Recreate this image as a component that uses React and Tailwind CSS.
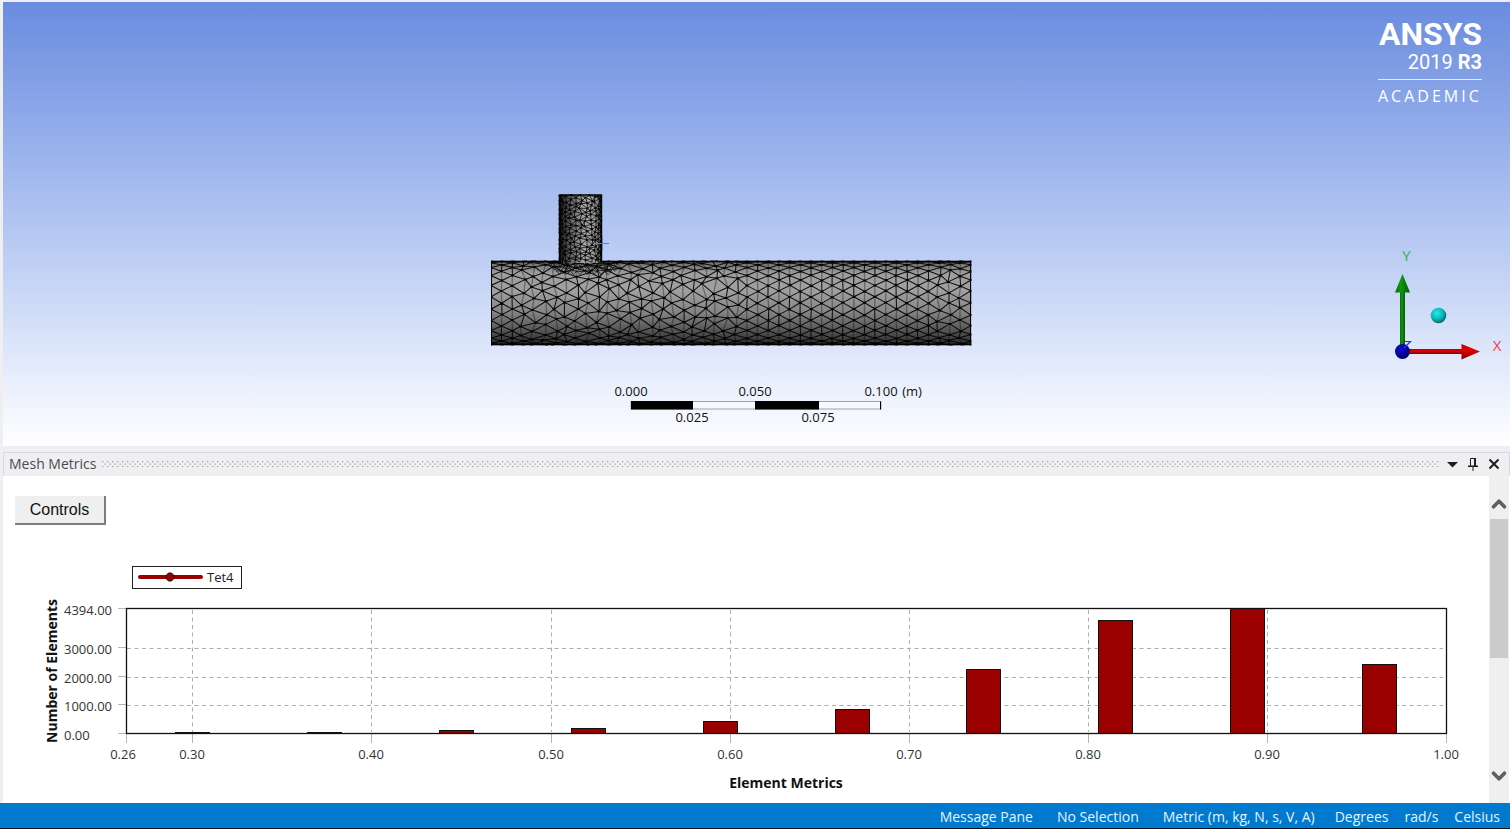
import { ChevronDown, ChevronUp } from "lucide-react";

const STATUS_ITEMS = [
  { label: "Message Pane", className: "mr-6" },
  { label: "No Selection", className: "mr-6" },
  { label: "Metric (m, kg, N, s, V, A)", className: "mr-5" },
  { label: "Degrees", className: "mr-4" },
  { label: "rad/s", className: "mr-4" },
  { label: "Celsius", className: "" },
];

const BARS = [45, 50, 110, 180, 420, 850, 2230, 3940, 4394, 2420];
const X_TICKS = [0.3, 0.4, 0.5, 0.6, 0.7, 0.8, 0.9, 1.0];
const Y_TICKS = [4394, 3000, 2000, 1000, 0];

// small seeded generator so that the mesh is the same on every render
const createRandom = (seed) => {
  let s = seed;
  return () => {
    s = (s * 16807) % 2147483647;
    return s / 2147483647;
  };
};

const segment = (a, b) =>
  `M${a[0].toFixed(1)} ${a[1].toFixed(1)}L${b[0].toFixed(1)} ${b[1].toFixed(1)}`;

const clampAngle = (t) => Math.max(-Math.PI / 2, Math.min(Math.PI / 2, t));

const buildPipe = () => {
  const random = createRandom(4217);
  const cols = 45;
  const rows = 11;
  const points = [];
  for (let i = 0; i <= cols; i++) {
    const column = [];
    const x0 = 491 + (480 * i) / cols;
    const rough = i > 2 && i < 24 ? 0.9 : i > 41 && i < cols ? 0.7 : 0.15;
    for (let j = -1; j <= rows + 1; j++) {
      const angle =
        -Math.PI / 2 +
        ((j + (i % 2) / 2 + (random() - 0.5) * 0.5 * rough) * Math.PI) / rows;
      const edge = i === 0 || i === cols;
      const x = edge ? x0 : x0 + (random() - 0.5) * 6 * rough;
      column.push([x, 303 + 42 * Math.sin(clampAngle(angle))]);
    }
    points.push(column);
  }

  let dark = "";
  let soft = "";
  let nodes = "";
  for (let i = 0; i <= cols; i++) {
    for (let j = 0; j < rows + 2; j++) {
      const p = points[i][j];
      const r = random();
      if (r > 0.62) dark += segment(p, points[i][j + 1]);
      else soft += segment(p, points[i][j + 1]);
      nodes += `M${(p[0] - 1.5).toFixed(1)} ${p[1].toFixed(1)}h3`;
      if (i < cols) {
        const k = i % 2 ? j + 1 : j - 1;
        dark += segment(p, points[i + 1][j]);
        if (k >= 0) dark += segment(p, points[i + 1][k]);
      }
    }
  }
  return { dark, soft, nodes };
};

const buildBranch = () => {
  const random = createRandom(911);
  const cols = 12;
  const rows = 14;
  const points = [];
  for (let i = 0; i <= cols; i++) {
    const column = [];
    for (let j = 0; j <= rows; j++) {
      const angle = -Math.PI / 2 + ((i + (random() - 0.5) * 0.7) * Math.PI) / cols;
      const y = 195 + ((j + (i % 2) / 2 + (random() - 0.5) * 0.6) * 68) / rows;
      column.push([580.5 + 21 * Math.sin(clampAngle(angle)), Math.max(195, y)]);
    }
    points.push(column);
  }

  let dark = "";
  let nodes = "";
  for (let i = 0; i < cols; i++) {
    for (let j = 0; j < rows; j++) {
      const p = points[i][j];
      const k = i % 2 ? j + 1 : j - 1;
      dark += segment(p, points[i][j + 1]) + segment(p, points[i + 1][j]);
      if (k >= 0) dark += segment(p, points[i + 1][k]);
      nodes += `M${(p[0] - 1).toFixed(1)} ${p[1].toFixed(1)}h2`;
    }
  }
  return { dark, nodes };
};

// finer elements where the branch enters the pipe
const buildJunction = () => {
  const random = createRandom(77);
  let dark = "";
  for (let row = 0; row < 3; row++) {
    const step = 5 + row;
    const y = 262 + row * 4;
    for (let x = 548 + row * 4; x < 618 - row * 4; x += step) {
      const a = [x, y + random() * 2];
      dark += segment(a, [x + step / 2, y + 4 + random() * 2]);
      dark += segment([x + step / 2, y + 4], [x + step, y + random() * 2]);
      dark += segment(a, [x + step, y + random() * 2]);
    }
  }
  return dark;
};

const pipe = buildPipe();
const branch = buildBranch();
const junction = buildJunction();

const Model = () => (
  <svg
    viewBox="3 2 1507 444"
    className="absolute inset-0 w-full h-full"
    role="img"
    aria-label="Pipe mesh"
  >
    <defs>
      <linearGradient id="pipe" x1="0" y1="0" x2="0" y2="1">
        <stop offset="0" stopColor="#6a6a6a" />
        <stop offset="0.15" stopColor="#9e9e9e" />
        <stop offset="0.35" stopColor="#a0a0a0" />
        <stop offset="0.6" stopColor="#868686" />
        <stop offset="0.85" stopColor="#505050" />
        <stop offset="1" stopColor="#2a2a2a" />
      </linearGradient>
      <linearGradient id="branch" x1="0" y1="0" x2="1" y2="0">
        <stop offset="0" stopColor="#222222" />
        <stop offset="0.3" stopColor="#686868" />
        <stop offset="0.6" stopColor="#a8a8a8" />
        <stop offset="0.85" stopColor="#9a9a9a" />
        <stop offset="1" stopColor="#555555" />
      </linearGradient>
      <clipPath id="pipe-outline">
        <rect x="491" y="260.500" width="480.500" height="85" />
      </clipPath>
    </defs>

    <g clipPath="url(#pipe-outline)">
      <rect x="491" y="261" width="480" height="84" fill="url(#pipe)" />
      <path d={pipe.soft} stroke="#000" strokeOpacity="0.35" strokeWidth="1.300" />
      <path d={pipe.dark} stroke="#000" strokeOpacity="0.9" strokeWidth="1.050" />
      <path d={pipe.nodes} stroke="#000" strokeOpacity="0.85" strokeWidth="2" />
      <path d={junction} stroke="#000" strokeOpacity="0.8" strokeWidth="0.9" />
      <path d="M491 261.500H971M491 344.500H971" stroke="#000" strokeWidth="1.600" />
      <path d="M491.500 261V345M970.500 261V345" stroke="#000" strokeWidth="1" />
    </g>

    <rect x="559" y="195" width="43" height="68" fill="url(#branch)" />
    <path d={branch.dark} stroke="#000" strokeOpacity="0.8" strokeWidth="0.95" />
    <path d={branch.nodes} stroke="#000" strokeOpacity="0.8" strokeWidth="2" />
    <path d="M559.500 262V195H601.500V262" fill="none" stroke="#000" strokeWidth="1.400" />

    <path d="M594 243.500H609M602.500 236V251" stroke="#5b80e0" strokeWidth="1" />

    <rect x="631" y="401.500" width="250" height="7.500" fill="#f8f9fe" stroke="#a3a3a8" />
    <path d="M631 401h62v8.500h-62zM755 401h64v8.500h-64z" fill="#000" />
    <path d="M880.500 401.500v8" stroke="#000" />
    <g className="text-[13px]" fill="#111" textAnchor="middle">
      <text x="631" y="396">0.000</text>
      <text x="755" y="396">0.050</text>
      <text x="881" y="396">0.100</text>
      <text x="912" y="396">(m)</text>
      <text x="692" y="422">0.025</text>
      <text x="818" y="422">0.075</text>
    </g>
  </svg>
);

const Triad = () => (
  <svg
    width="120"
    height="130"
    viewBox="1390 240 120 130"
    className="absolute right-0 bottom-[76px]"
    role="img"
    aria-label="Axis triad"
  >
    <defs>
      <linearGradient id="green" x1="0" y1="0" x2="1" y2="0">
        <stop offset="0" stopColor="#0a6a0a" />
        <stop offset="0.4" stopColor="#0b9a0b" />
        <stop offset="1" stopColor="#075507" />
      </linearGradient>
      <linearGradient id="red" x1="0" y1="0" x2="0" y2="1">
        <stop offset="0" stopColor="#b00000" />
        <stop offset="0.4" stopColor="#e60000" />
        <stop offset="1" stopColor="#800000" />
      </linearGradient>
      <radialGradient id="blue" cx="0.4" cy="0.35" r="0.65">
        <stop offset="0" stopColor="#0b0bd8" />
        <stop offset="1" stopColor="#00006a" />
      </radialGradient>
      <radialGradient id="cyan" cx="0.4" cy="0.35" r="0.65">
        <stop offset="0" stopColor="#2ee6e6" />
        <stop offset="0.6" stopColor="#07b8b8" />
        <stop offset="1" stopColor="#046a6a" />
      </radialGradient>
    </defs>
    <rect x="1400" y="290" width="5" height="56" fill="url(#green)" />
    <path d="M1402.500 274L1410 292.500H1395Z" fill="url(#green)" />
    <rect x="1406" y="349" width="56" height="5" fill="url(#red)" />
    <path d="M1480 351.500L1461.500 344V359.500Z" fill="url(#red)" />
    <circle cx="1402.500" cy="351.500" r="7.500" fill="url(#blue)" />
    <circle cx="1438.500" cy="315.500" r="7.800" fill="url(#cyan)" />
    <path d="M1403 341.500H1410.500L1404 348" fill="none" stroke="#2c2cf0" strokeWidth="1.200" />
    <g className="text-[15px]" textAnchor="middle">
      <text x="1406.500" y="261" fill="#2db84a">
        Y
      </text>
      <text x="1497" y="351" fill="#ee3a42">
        X
      </text>
    </g>
  </svg>
);

const Logo = () => (
  <div className="absolute top-[14px] right-7 flex flex-col items-end text-white font-['Roboto','Open_Sans',sans-serif]">
    <div className="text-[32px] leading-9 font-bold">ANSYS</div>
    <div className="text-xl leading-5">
      2019 <span className="font-bold">R3</span>
    </div>
    <div className="mt-[7px] pt-1.5 w-[104px] border-t border-white/80 text-base leading-5 font-['Open_Sans',sans-serif]">
      <span className="tracking-[3px]">ACADEMIC</span>
    </div>
  </div>
);

const PanelHeader = () => (
  <div className="flex items-center h-6 border border-b-0 border-[#d5d6e6] pl-[5px] pr-[9px] pb-0.5 text-[#4b4b50]">
    <h2 className="text-sm">Mesh Metrics</h2>
    <svg className="flex-1 h-[6px] ml-1.5 mr-2" aria-hidden="true">
      <defs>
        <pattern id="grip" width="5" height="5" patternUnits="userSpaceOnUse">
          <path d="M0 0h1.300v1.300h-1.300zM2.500 2.500h1.300v1.300h-1.300z" fill="#a4a4a8" />
        </pattern>
      </defs>
      <rect width="100%" height="6" fill="url(#grip)" />
    </svg>
    <div className="flex items-center gap-[10px] text-[#1e1e1e]">
      <button aria-label="Window position">
        <svg width="11" height="12" className="block">
          <path d="M0 4h11L5.500 9.500z" fill="currentColor" />
        </svg>
      </button>
      <button aria-label="Auto hide">
        <svg width="10" height="14" className="block">
          <path d="M2.500 9V1.500H7.500V9" fill="none" stroke="currentColor" />
          <path d="M6 1h2v8h-2zM0 8.500h10v1.500h-10zM4.500 10h1v4h-1z" fill="currentColor" />
        </svg>
      </button>
      <button aria-label="Close">
        <svg width="12" height="12" className="block">
          <path d="M1.500 1.500L10.500 10.500M10.500 1.500L1.500 10.500" stroke="currentColor" strokeWidth="2" />
        </svg>
      </button>
    </div>
  </div>
);

const scaleX = (v) => 1447 - (1 - v) * 1791;
const scaleY = (v) => 734 - (v * 125.5) / 4394;

const Chart = () => (
  <svg
    viewBox="3 560 1486 243"
    className="block w-full text-[13px]"
    role="img"
    aria-label="Number of Elements by Element Metrics"
  >
    <rect x="132.500" y="566.500" width="109" height="22" fill="#fff" stroke="#222" />
    <path d="M140 577H201" stroke="#9a0000" strokeWidth="4" strokeLinecap="round" />
    <path d="M168.500 573h3l2.500 2.500v3l-2.500 2.500h-3l-2.500-2.500v-3z" fill="#9a0000" stroke="#111" />
    <text x="207" y="582" fill="#222">
      Tet4
    </text>

    {Y_TICKS.map((v) => (
      <g key={v}>
        <path d={`M118 ${Math.round(scaleY(v)) - 0.5}H127`} stroke="#b5b5b5" />
        {v > 0 && v < 4394 && (
          <path
            d={`M127 ${Math.round(scaleY(v)) + 0.5}H1443`}
            stroke="#adadad"
            strokeDasharray="4 3.500"
          />
        )}
        <text x="64" y={Math.round(scaleY(v)) + 6} fill="#333">
          {v.toFixed(2)}
        </text>
      </g>
    ))}
    {X_TICKS.map((v) => (
      <g key={v}>
        <path d={`M${Math.round(scaleX(v)) - 0.5} 734V743`} stroke="#b5b5b5" />
        {v < 1 && (
          <path
            d={`M${Math.round(scaleX(v)) - 0.5} 610V732`}
            stroke="#adadad"
            strokeDasharray="4 3.500"
          />
        )}
        <text x={Math.round(scaleX(v)) - 1} y="759" fill="#333" textAnchor="middle">
          {v.toFixed(2)}
        </text>
      </g>
    ))}
    <path d="M126.500 734V743" stroke="#b5b5b5" />
    <text x="123" y="759" fill="#333" textAnchor="middle">
      0.26
    </text>

    {BARS.map((v, i) => {
      const top = Math.round(scaleY(v)) - 0.5;
      return (
        <rect
          key={i}
          x={175.5 + Math.round(i * 131.9)}
          y={top}
          width="34"
          height={733.5 - top}
          fill="#9a0000"
          stroke="#111"
        />
      );
    })}
    <rect x="126.500" y="608.500" width="1320" height="125" fill="none" stroke="#111" strokeWidth="1.300" />

    <text x="786" y="788" className="text-sm font-bold" fill="#111" textAnchor="middle">
      Element Metrics
    </text>
    <text
      transform="translate(57 671) rotate(-90)"
      className="text-sm font-bold"
      fill="#111"
      textAnchor="middle"
    >
      Number of Elements
    </text>
  </svg>
);

const ScrollBar = () => (
  <div className="w-5 shrink-0 bg-[#efefef] flex flex-col items-center pt-[17px] pb-4 text-[#606060]">
    <button aria-label="Scroll up">
      <ChevronUp size={22} strokeWidth={4} />
    </button>
    <div className="flex-1 w-full pt-1 px-px">
      <div className="h-[139px] bg-[#cbcbcb]" />
    </div>
    <button aria-label="Scroll down">
      <ChevronDown size={22} strokeWidth={4} />
    </button>
  </div>
);

const App = () => {
  return (
    <div className="min-h-screen flex flex-col bg-[#efeff2] font-['Open_Sans','Noto_Sans',sans-serif]">
      <main className="flex-1 flex flex-col pt-0.5 pl-[3px]">
        <section className="relative flex-1 min-h-[444px] bg-linear-to-b from-[#6a8bdf] to-white">
          <Model />
          <Logo />
          <Triad />
        </section>

        <section className="pt-1.5">
          <PanelHeader />
          <div className="flex bg-white pr-px">
            <div className="flex-1 min-w-0 pt-5">
              <button className="ml-3 mb-[35px] block w-[91px] h-[29px] bg-[#efefef] border-r-2 border-b-2 border-[#7d7d7d] font-['Liberation_Sans',sans-serif] text-base leading-6 text-[#111]">
                Controls
              </button>
              <Chart />
            </div>
            <ScrollBar />
          </div>
        </section>
      </main>

      <footer className="h-[26px] flex items-center justify-end pt-0.5 pr-[10px] bg-[#007acf] border-b border-[#0c1018] text-sm text-[#e8f3fb]">
        {STATUS_ITEMS.map((item) => (
          <span key={item.label} className={item.className}>
            {item.label}
          </span>
        ))}
      </footer>
    </div>
  );
};

export default App;
